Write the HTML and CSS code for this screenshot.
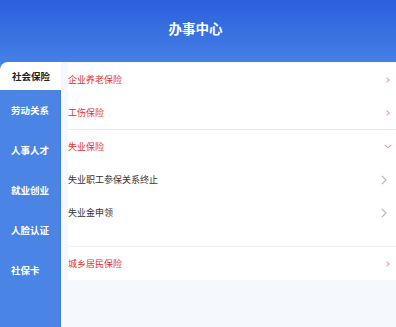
FILE: index.html
```html
<!DOCTYPE html>
<html lang="zh">
<head>
<meta charset="utf-8">
<link rel="stylesheet" href="styles.css">
</head>
<body>
<div class="page">
  <header class="header">办事中心</header>
  <div class="main">
    <nav class="sidebar">
      <div class="nav-item active">社会保险</div>
      <div class="nav-item">劳动关系</div>
      <div class="nav-item">人事人才</div>
      <div class="nav-item">就业创业</div>
      <div class="nav-item">人脸认证</div>
      <div class="nav-item">社保卡</div>
    </nav>
    <section class="content">
      <div class="list">
        <div class="row head">
          <span class="label red">企业养老保险</span>
          <svg class="chev" viewBox="0 0 4 6"><path d="M0.6 0.6 L3.3 3 L0.6 5.4" /></svg>
        </div>
        <div class="row head sep">
          <span class="label red">工伤保险</span>
          <svg class="chev" viewBox="0 0 4 6"><path d="M0.6 0.6 L3.3 3 L0.6 5.4" /></svg>
        </div>
        <div class="group sep">
          <div class="row head">
            <span class="label red">失业保险</span>
            <svg class="chev-down" viewBox="0 0 8 5"><path d="M0.7 0.8 L4 3.8 L7.3 0.8" /></svg>
          </div>
          <div class="row sub">
            <span class="label">失业职工参保关系终止</span>
            <svg class="chev-grey" viewBox="0 0 6 10"><path d="M0.8 0.8 L5 5 L0.8 9.2" /></svg>
          </div>
          <div class="row sub">
            <span class="label">失业金申领</span>
            <svg class="chev-grey" viewBox="0 0 6 10"><path d="M0.8 0.8 L5 5 L0.8 9.2" /></svg>
          </div>
        </div>
        <div class="row head">
          <span class="label red">城乡居民保险</span>
          <svg class="chev" viewBox="0 0 4 6"><path d="M0.6 0.6 L3.3 3 L0.6 5.4" /></svg>
        </div>
      </div>
    </section>
  </div>
</div>
</body>
</html>
```

FILE: styles.css
```css
html, body {
  margin: 0;
  padding: 0;
}
body {
  font-family: "Noto Sans CJK SC", "Noto Sans", sans-serif;
  width: 396px;
  height: 327px;
  overflow: hidden;
}
.page {
  display: flex;
  flex-direction: column;
  height: 327px;
}
.header {
  height: 62px;
  flex: none;
  display: flex;
  align-items: center;
  justify-content: center;
  color: #fff;
  font-size: 13.5px;
  font-weight: 700;
  background: linear-gradient(180deg, #2c5fdc 0%, #4480e6 100%);
  padding: 0 5px 7px 0;
  box-sizing: border-box;
}
.main {
  flex: 1;
  display: flex;
  min-height: 0;
}
.sidebar {
  width: 61px;
  flex: none;
  background: #4a85e6;
  display: flex;
  flex-direction: column;
  border-right: 1px solid #4079de;
  box-sizing: border-box;
}
.nav-item {
  height: 40px;
  display: flex;
  align-items: center;
  padding-left: 11px;
  color: #fff;
  font-size: 9.5px;
  font-weight: 700;
}
.nav-item.active {
  height: 28px;
  padding-left: 12px;
  background: #fff;
  color: #222;
  border-top-left-radius: 8px;
  margin-right: -1px;
}
.content {
  flex: 1;
  background: #f5f8fc;
  padding: 1px 0 0 7px;
}
.list {
  background: #fff;
}
.row {
  display: flex;
  align-items: center;
  justify-content: space-between;
  padding: 0 6px 0 0;
}
.row.head {
  height: 33px;
}
.row.sub {
  height: 33px;
  padding-right: 9px;
}
.group {
  padding-bottom: 17px;
}
.sep {
  border-bottom: 1px solid #e6eaf1;
}
.group.sep {
  border-bottom-color: #eef1f5;
}
.label {
  font-size: 9px;
  color: #333;
}
.label.red {
  color: #e8302c;
}
.chev {
  width: 4px;
  height: 6px;
  fill: none;
  stroke: #f39a9a;
  stroke-width: 1.1;
}
.chev-down {
  width: 8px;
  height: 5px;
  fill: none;
  stroke: #f39a9a;
  stroke-width: 1.1;
  margin-right: -2px;
}
.chev-grey {
  width: 6px;
  height: 10px;
  fill: none;
  stroke: #b8b8b8;
  stroke-width: 1.2;
}
```
